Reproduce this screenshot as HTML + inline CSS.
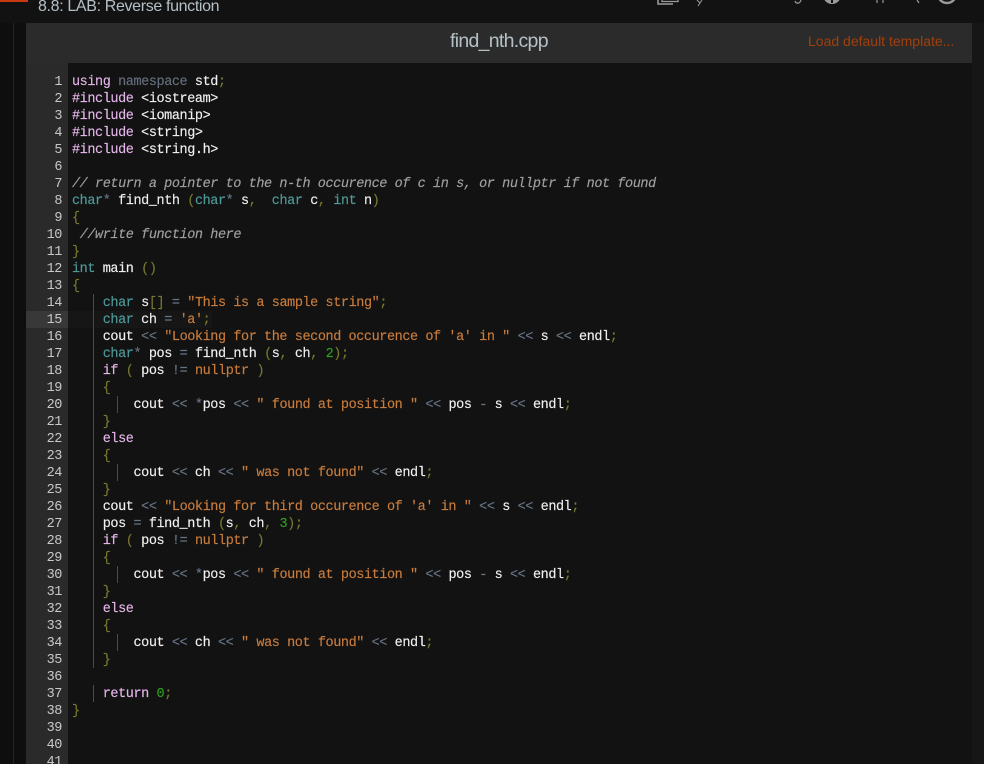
<!DOCTYPE html>
<html><head><meta charset="utf-8">
<style>
html,body{margin:0;padding:0;background:#121212;width:984px;height:764px;overflow:hidden}
.a{position:absolute}
#code div{position:absolute;left:72px;margin-top:1px;height:17px;white-space:pre;font:13.5px/17px "Liberation Mono",monospace;letter-spacing:-.42px;color:#f0f0f0;-webkit-text-stroke:.15px currentColor}
#nums div{position:absolute;right:0;margin-top:1px;width:50px;text-align:right;height:17px;font:13.5px/17px "Liberation Mono",monospace;letter-spacing:-.42px;color:#c8c8c8}
.k{color:#e3b5e8}.t{color:#4e9a9a}.o{color:#667485}.p{color:#78782f}.s{color:#c97c3c}.n{color:#2f9c20}.c{color:#a0a0a0;font-style:italic}.h{color:#666f7d}
.g{position:absolute;width:1px;background:#4a4a4a}
</style></head><body>
<div class="a" style="left:0;top:0;width:28px;height:1.500px;background:#c83a12"></div>
<div class="a" style="left:38px;top:-3px;font:16px/20px 'Liberation Sans',sans-serif;color:#b4c0c6;letter-spacing:-.35px;white-space:nowrap">8.8: LAB: Reverse function</div>
<svg class="a" style="left:640px;top:0" width="344" height="12" fill="none">
<path d="M18 0V4H33M33 0" stroke="#9a9a9a" stroke-width="1.6"/>
<path d="M22 0V1.500H38V0" stroke="#9a9a9a" stroke-width="1.300"/>
<path d="M57 0L60 3 58 6M62 0L60 3" stroke="#9a9a9a" stroke-width="1"/>
<path d="M155 1C156 4 160 4 161 0" stroke="#9a9a9a" stroke-width="1.200"/>
<circle cx="192" cy="-5" r="9" fill="#9a9a9a"/>
<path d="M192 0V3" stroke="#121212" stroke-width="2"/>
<path d="M237 0V3M243 0V3" stroke="#9a9a9a" stroke-width="1.200"/>
<path d="M277 0L279 3" stroke="#9a9a9a" stroke-width="1.200"/>
<circle cx="307" cy="-6" r="9" stroke="#9a9a9a" stroke-width="2.400"/>
</svg>
<div class="a" style="left:0;top:23px;width:26px;height:741px;background:#0e0e0e"></div>
<div class="a" style="left:13px;top:23px;width:1px;height:741px;background:#242424"></div>
<div class="a" style="left:26px;top:23px;width:946px;height:40px;background:#2b2b2b"></div>
<div class="a" style="left:972px;top:23px;width:12px;height:741px;background:#161616"></div>
<div class="a" style="left:26px;top:63px;width:42px;height:701px;background:#2a2a2a"></div>
<div class="a" style="left:26px;top:311px;width:42px;height:17px;background:#383838"></div>
<div class="a" style="left:68px;top:311px;width:144px;height:17px;background:#161616"></div>
<div class="a" style="left:450px;top:30px;font:19.500px/22px 'Liberation Sans',sans-serif;letter-spacing:-.7px;color:#b4c0c6;white-space:nowrap">find_nth.cpp</div>
<div class="a" style="left:808px;top:32px;font:14px/18px 'Liberation Sans',sans-serif;color:#a33f0c;white-space:nowrap">Load default template...</div>

<div class="g" style="left:93px;top:294px;height:374px"></div>
<div class="g" style="left:93px;top:685px;height:17px"></div>
<div class="g" style="left:117px;top:396px;height:17px"></div>
<div class="g" style="left:117px;top:464px;height:17px"></div>
<div class="g" style="left:117px;top:566px;height:17px"></div>
<div class="g" style="left:117px;top:634px;height:17px"></div>

<div id="nums" class="a" style="left:0;top:0;width:62px;height:764px;overflow:hidden">
<div style="top:73px">1</div><div style="top:90px">2</div><div style="top:107px">3</div><div style="top:124px">4</div><div style="top:141px">5</div><div style="top:158px">6</div><div style="top:175px">7</div><div style="top:192px">8</div><div style="top:209px">9</div><div style="top:226px">10</div><div style="top:243px">11</div><div style="top:260px">12</div><div style="top:277px">13</div><div style="top:294px">14</div><div style="top:311px">15</div><div style="top:328px">16</div><div style="top:345px">17</div><div style="top:362px">18</div><div style="top:379px">19</div><div style="top:396px">20</div><div style="top:413px">21</div><div style="top:430px">22</div><div style="top:447px">23</div><div style="top:464px">24</div><div style="top:481px">25</div><div style="top:498px">26</div><div style="top:515px">27</div><div style="top:532px">28</div><div style="top:549px">29</div><div style="top:566px">30</div><div style="top:583px">31</div><div style="top:600px">32</div><div style="top:617px">33</div><div style="top:634px">34</div><div style="top:651px">35</div><div style="top:668px">36</div><div style="top:685px">37</div><div style="top:702px">38</div><div style="top:719px">39</div><div style="top:736px">40</div><div style="top:753px">41</div>
</div>

<div id="code">
<div style="top:73px"><span class="k">using</span> <span class="h">namespace</span> std<span class="p">;</span></div>
<div style="top:90px"><span class="k">#include</span> &lt;iostream&gt;</div>
<div style="top:107px"><span class="k">#include</span> &lt;iomanip&gt;</div>
<div style="top:124px"><span class="k">#include</span> &lt;string&gt;</div>
<div style="top:141px"><span class="k">#include</span> &lt;string.h&gt;</div>
<div style="top:175px"><span class="c">// return a pointer to the n-th occurence of c in s, or nullptr if not found</span></div>
<div style="top:192px"><span class="t">char</span><span class="o">*</span> find_nth <span class="p">(</span><span class="t">char</span><span class="o">*</span> s<span class="p">,</span>  <span class="t">char</span> c<span class="p">,</span> <span class="t">int</span> n<span class="p">)</span></div>
<div style="top:209px"><span class="p">{</span></div>
<div style="top:226px"> <span class="c">//write function here</span></div>
<div style="top:243px"><span class="p">}</span></div>
<div style="top:260px"><span class="t">int</span> main <span class="p">()</span></div>
<div style="top:277px"><span class="p">{</span></div>
<div style="top:294px">    <span class="t">char</span> s<span class="p">[]</span> <span class="o">=</span> <span class="s">"This is a sample string"</span><span class="p">;</span></div>
<div style="top:311px">    <span class="t">char</span> ch <span class="o">=</span> <span class="s">'a'</span><span class="p">;</span></div>
<div style="top:328px">    cout <span class="o">&lt;&lt;</span> <span class="s">"Looking for the second occurence of 'a' in "</span> <span class="o">&lt;&lt;</span> s <span class="o">&lt;&lt;</span> endl<span class="p">;</span></div>
<div style="top:345px">    <span class="t">char</span><span class="o">*</span> pos <span class="o">=</span> find_nth <span class="p">(</span>s<span class="p">,</span> ch<span class="p">,</span> <span class="n">2</span><span class="p">);</span></div>
<div style="top:362px">    <span class="k">if</span> <span class="p">(</span> pos <span class="o">!=</span> <span class="s">nullptr</span> <span class="p">)</span></div>
<div style="top:379px">    <span class="p">{</span></div>
<div style="top:396px">        cout <span class="o">&lt;&lt;</span> <span class="o">*</span>pos <span class="o">&lt;&lt;</span> <span class="s">" found at position "</span> <span class="o">&lt;&lt;</span> pos <span class="o">-</span> s <span class="o">&lt;&lt;</span> endl<span class="p">;</span></div>
<div style="top:413px">    <span class="p">}</span></div>
<div style="top:430px">    <span class="k">else</span></div>
<div style="top:447px">    <span class="p">{</span></div>
<div style="top:464px">        cout <span class="o">&lt;&lt;</span> ch <span class="o">&lt;&lt;</span> <span class="s">" was not found"</span> <span class="o">&lt;&lt;</span> endl<span class="p">;</span></div>
<div style="top:481px">    <span class="p">}</span></div>
<div style="top:498px">    cout <span class="o">&lt;&lt;</span> <span class="s">"Looking for third occurence of 'a' in "</span> <span class="o">&lt;&lt;</span> s <span class="o">&lt;&lt;</span> endl<span class="p">;</span></div>
<div style="top:515px">    pos <span class="o">=</span> find_nth <span class="p">(</span>s<span class="p">,</span> ch<span class="p">,</span> <span class="n">3</span><span class="p">);</span></div>
<div style="top:532px">    <span class="k">if</span> <span class="p">(</span> pos <span class="o">!=</span> <span class="s">nullptr</span> <span class="p">)</span></div>
<div style="top:549px">    <span class="p">{</span></div>
<div style="top:566px">        cout <span class="o">&lt;&lt;</span> <span class="o">*</span>pos <span class="o">&lt;&lt;</span> <span class="s">" found at position "</span> <span class="o">&lt;&lt;</span> pos <span class="o">-</span> s <span class="o">&lt;&lt;</span> endl<span class="p">;</span></div>
<div style="top:583px">    <span class="p">}</span></div>
<div style="top:600px">    <span class="k">else</span></div>
<div style="top:617px">    <span class="p">{</span></div>
<div style="top:634px">        cout <span class="o">&lt;&lt;</span> ch <span class="o">&lt;&lt;</span> <span class="s">" was not found"</span> <span class="o">&lt;&lt;</span> endl<span class="p">;</span></div>
<div style="top:651px">    <span class="p">}</span></div>
<div style="top:685px">    <span class="k">return</span> <span class="n">0</span><span class="p">;</span></div>
<div style="top:702px"><span class="p">}</span></div>
</div>
</body></html>
